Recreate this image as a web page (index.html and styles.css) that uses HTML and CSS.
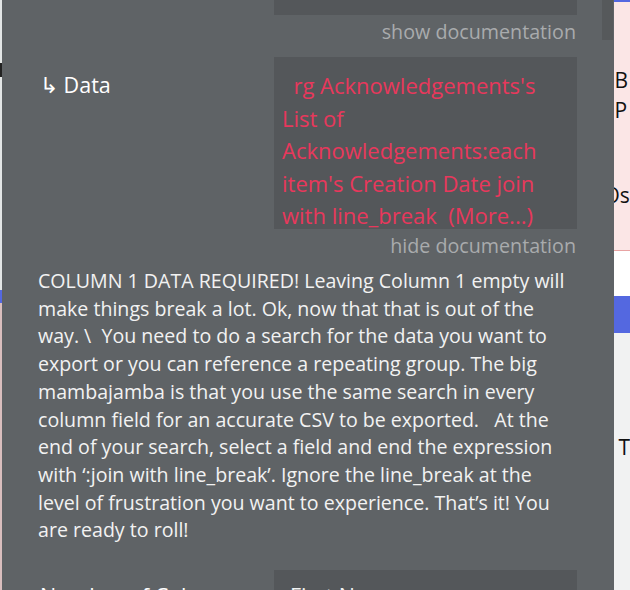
FILE: index.html
```html
<!DOCTYPE html>
<html lang="en">
<head>
    <meta charset="UTF-8">
    <meta name="viewport" content="width=device-width, initial-scale=1.0">
    <title>Export CSV - properties</title>
    <link rel="stylesheet" href="styles.css">
</head>
<body>

    <!-- page behind the property editor -->
    <div class="page">
        <div class="page-left">
            <div class="left-top"><span class="tick"></span></div>
            <div class="left-bar"></div>
            <div class="left-rest"></div>
        </div>
        <div class="page-right">
            <div class="alert">
                <p class="alert-line first">B</p>
                <p class="alert-line">P</p>
                <p class="alert-line shifted">Os</p>
            </div>
            <div class="white-gap"></div>
            <div class="blue-bar"></div>
            <div class="gray-area">
                <p class="gray-line">T</p>
            </div>
        </div>
    </div>

    <!-- property editor -->
    <div class="editor">
        <div class="scroll-thumb"></div>
        <div class="editor-inner">

            <div class="field-row">
                <div class="field-label"></div>
                <div class="field-value">
                    <div class="field-box top-box"></div>
                    <a class="doc-link">show documentation</a>
                </div>
            </div>

            <div class="field-row data-row">
                <div class="field-label">&#8627; Data</div>
                <div class="field-value">
                    <div class="field-box expression">  rg Acknowledgements's List of Acknowledgements:each item's Creation Date join with line_break  (More...)</div>
                    <a class="doc-link">hide documentation</a>
                </div>
            </div>

            <p class="doc-text">COLUMN 1 DATA REQUIRED! Leaving Column 1 empty will make things break a lot. Ok, now that that is out of the way. \  You need to do a search for the data you want to export or you can reference a repeating group. The big mambajamba is that you use the same search in every column field for an accurate CSV to be exported.   At the end of your search, select a field and end the expression with ‘:join with line_break’. Ignore the line_break at the level of frustration you want to experience. That’s it! You are ready to roll!</p>

            <div class="field-row last-row">
                <div class="field-label">Number of Columns</div>
                <div class="field-value">
                    <div class="field-box plain">First Name</div>
                </div>
            </div>

        </div>
    </div>

</body>
</html>
```

FILE: styles.css
```css
body {
    margin: 0;
    font-family: 'Open Sans', sans-serif;
    overflow: hidden;
    height: 590px;
}

/* background page */
.page {
    display: flex;
    height: 590px;
}

.page-left {
    width: 300px;
    display: flex;
    flex-direction: column;
}

.left-top {
    height: 290px;
    background-color: #e3e6e6;
    padding-top: 63px;
    box-sizing: border-box;
}

.tick {
    display: block;
    width: 2px;
    height: 14px;
    background-color: #222;
}

.left-bar {
    height: 13px;
    background-color: #5468e0;
}

.left-rest {
    flex: 1;
    background-color: #d9bebe;
}

.page-right {
    flex: 1;
    display: flex;
    flex-direction: column;
    padding-left: 300px;
}

.alert {
    height: 248px;
    border-top: 2px solid #5468e0;
    border-bottom: 1px solid #e8a3a3;
    background-color: #fbe6e6;
    padding-left: 18px;
    color: #111;
    font-size: 21px;
}

.alert-line {
    margin: 0;
    line-height: 30px;
}

.alert-line.first {
    margin-top: 63px;
}

.alert-line.shifted {
    margin-top: 55px;
    margin-left: -11px;
}

.white-gap {
    height: 45px;
    background-color: #fff;
}

.blue-bar {
    height: 37px;
    background-color: #5468e0;
}

.gray-area {
    flex: 1;
    background-color: #f1f2f2;
    padding-left: 22px;
    font-size: 21px;
    color: #111;
}

.gray-line {
    margin: 100px 0 0;
}

/* property editor panel */
.editor {
    position: absolute;
    top: 0;
    left: 2px;
    width: 612px;
    height: 590px;
    background-color: #5f6366;
    overflow: hidden;
}

.scroll-thumb {
    position: absolute;
    top: 0;
    right: 1px;
    width: 11px;
    height: 40px;
    background-color: #56595b;
}

.editor-inner {
    margin-top: -30px;
    padding: 0 37px 0 38px;
}

.field-row {
    display: grid;
    grid-template-columns: 234px 303px;
}

.data-row {
    margin-top: 13px;
}

.field-label {
    color: #fff;
    font-size: 21.5px;
    line-height: 32px;
    padding-top: 12px;
}

.field-box {
    background-color: #54575a;
    box-sizing: border-box;
}

.top-box {
    height: 45px;
}

.doc-link {
    display: block;
    text-align: right;
    color: #a9abad;
    font-size: 19.7px;
    line-height: 24px;
    padding: 5px 1px 0 0;
    cursor: pointer;
}

.expression {
    height: 172px;
    overflow: hidden;
    padding: 12px 8px 0 8px;
    color: #e8385c;
    font-size: 22px;
    line-height: 32.5px;
    white-space: pre-wrap;
}

.doc-text {
    margin: 9px 0 0 -2px;
    color: #f2f2f2;
    font-size: 19.6px;
    line-height: 27.7px;
    white-space: pre-wrap;
}

.last-row {
    margin-top: 26px;
}

.last-row .field-label {
    padding-top: 10px;
}

.plain {
    height: 60px;
    padding: 10px 16px;
    color: #f2f2f2;
    font-size: 21.5px;
    line-height: 32px;
}
```
